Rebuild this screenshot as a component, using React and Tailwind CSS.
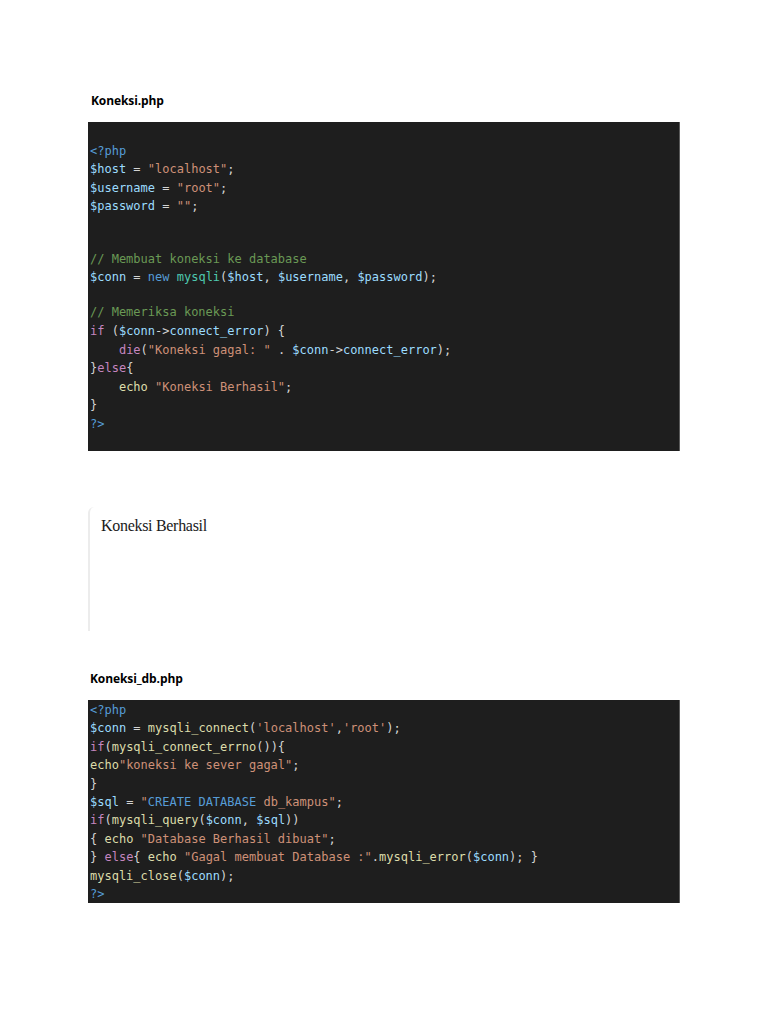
const C = {
  kw: 'text-[#569cd6]',
  v: 'text-[#9cdcfe]',
  p: 'text-[#d4d4d4]',
  s: 'text-[#ce9178]',
  cm: 'text-[#6a9955]',
  cls: 'text-[#4ec9b0]',
  ctl: 'text-[#c586c0]',
  fn: 'text-[#dcdcaa]',
};

const Line = ({ parts, h = 'h-[18.4px] leading-[18.4px]' }) => (
  <div className={`${h} whitespace-pre`}>
    {parts.map(([cls, text], i) => (
      <span key={i} className={C[cls]}>
        {text}
      </span>
    ))}
  </div>
);

const koneksi = [
  [['kw', '<?php']],
  [['v', '$host'], ['p', ' = '], ['s', '"localhost"'], ['p', ';']],
  [['v', '$username'], ['p', ' = '], ['s', '"root"'], ['p', ';']],
  [['v', '$password'], ['p', ' = '], ['s', '""'], ['p', ';']],
];

const koneksi2 = [
  [['cm', '// Membuat koneksi ke database']],
  [
    ['v', '$conn'],
    ['p', ' = '],
    ['kw', 'new'],
    ['p', ' '],
    ['cls', 'mysqli'],
    ['p', '('],
    ['v', '$host'],
    ['p', ', '],
    ['v', '$username'],
    ['p', ', '],
    ['v', '$password'],
    ['p', ');'],
  ],
];

const koneksi3 = [
  [['cm', '// Memeriksa koneksi']],
  [['ctl', 'if'], ['p', ' ('], ['v', '$conn'], ['p', '->'], ['v', 'connect_error'], ['p', ') {']],
  [
    ['p', '    '],
    ['ctl', 'die'],
    ['p', '('],
    ['s', '"Koneksi gagal: "'],
    ['p', ' . '],
    ['v', '$conn'],
    ['p', '->'],
    ['v', 'connect_error'],
    ['p', ');'],
  ],
  [['p', '}'], ['ctl', 'else'], ['p', '{']],
  [['p', '    '], ['fn', 'echo'], ['p', ' '], ['s', '"Koneksi Berhasil"'], ['p', ';']],
  [['p', '}']],
  [['kw', '?>']],
];

const koneksiDb = [
  [['kw', '<?php']],
  [['v', '$conn'], ['p', ' = '], ['fn', 'mysqli_connect'], ['p', '('], ['s', "'localhost'"], ['p', ','], ['s', "'root'"], ['p', ');']],
  [['ctl', 'if'], ['p', '('], ['fn', 'mysqli_connect_errno'], ['p', '()){']],
  [['fn', 'echo'], ['s', '"koneksi ke sever gagal"'], ['p', ';']],
  [['p', '}']],
  [['v', '$sql'], ['p', ' = '], ['s', '"'], ['kw', 'CREATE DATABASE'], ['s', ' db_kampus"'], ['p', ';']],
  [['ctl', 'if'], ['p', '('], ['fn', 'mysqli_query'], ['p', '('], ['v', '$conn'], ['p', ', '], ['v', '$sql'], ['p', '))']],
  [['p', '{ '], ['fn', 'echo'], ['p', ' '], ['s', '"Database Berhasil dibuat"'], ['p', ';']],
  [
    ['p', '} '],
    ['ctl', 'else'],
    ['p', '{ '],
    ['fn', 'echo'],
    ['p', ' '],
    ['s', '"Gagal membuat Database :"'],
    ['p', '.'],
    ['fn', 'mysqli_error'],
    ['p', '('],
    ['v', '$conn'],
    ['p', '); }'],
  ],
  [['fn', 'mysqli_close'], ['p', '('], ['v', '$conn'], ['p', ');']],
  [['kw', '?>']],
];

const mono = "font-['DejaVu_Sans_Mono',monospace] text-[12px]";
const heading = "font-['Open_Sans',sans-serif] font-bold text-[12px] leading-[18px] text-black tracking-[-0.1px]";

const App = () => {
  return (
    <div className="min-h-[1024px] w-[768px] bg-white pl-[88px] pt-[92px]">
      <div className={`${heading} pl-[3px]`}>Koneksi.php</div>

      <div className={`mt-[12px] h-[329px] w-[592px] border-r border-[#5a5a5a] bg-[#1e1e1e] pl-[2px] pt-[20px] ${mono}`}>
        {koneksi.map((l, i) => (
          <Line key={i} parts={l} />
        ))}
        <div className="h-[34px]" />
        {koneksi2.map((l, i) => (
          <Line key={i} parts={l} />
        ))}
        <div className="h-[17px]" />
        {koneksi3.map((l, i) => (
          <Line key={i} parts={l} h="h-[18.6px] leading-[18.6px]" />
        ))}
      </div>

      <div className="mt-[56px] h-[124px] w-[200px] rounded-tl-[6px] border-l-2 border-l-[#ececec] pl-[11px] pt-[9px]">
        <div className="font-['Liberation_Serif',serif] text-[16px] leading-[20px] tracking-[-0.3px] text-[#1a1a1a]">
          Koneksi Berhasil
        </div>
      </div>

      <div className={`${heading} mt-[39px] pl-[2px]`}>Koneksi_db.php</div>

      <div className={`mt-[12px] h-[203px] w-[592px] border-r border-[#5a5a5a] bg-[#1e1e1e] pl-[2px] pt-[1px] ${mono}`}>
        {koneksiDb.map((l, i) => (
          <Line key={i} parts={l} />
        ))}
      </div>
    </div>
  );
};

export default App;
